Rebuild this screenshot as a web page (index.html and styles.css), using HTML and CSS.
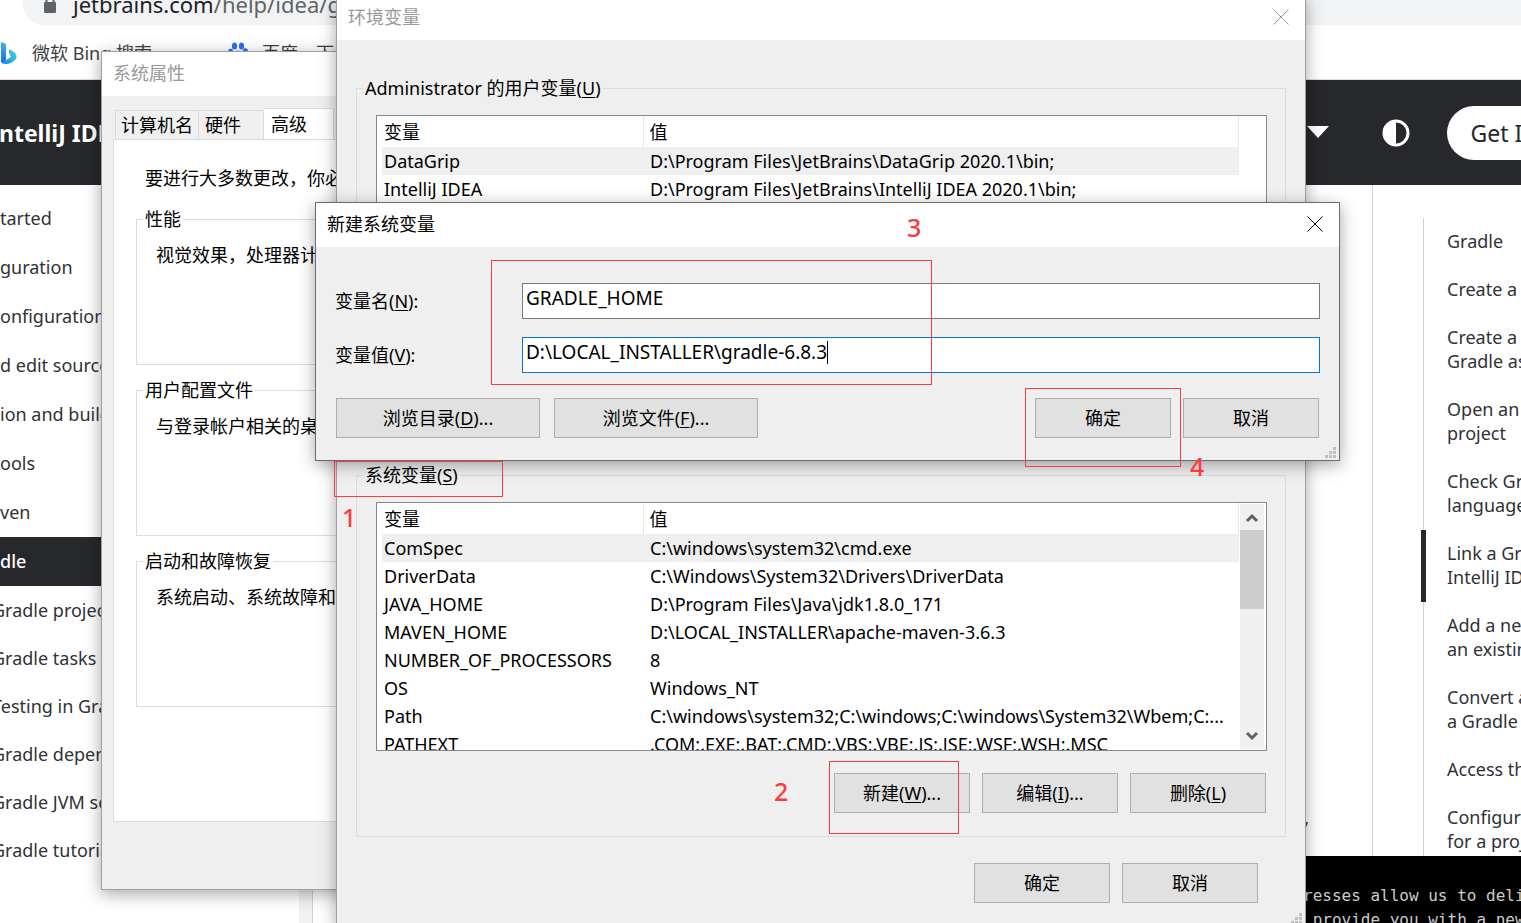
FILE: index.html
```html
<!DOCTYPE html>
<html lang="zh-CN">
<head>
<meta charset="utf-8">
<title>环境变量</title>
<link rel="stylesheet" href="styles.css">
</head>
<body>
<div class="desktop">

  <div class="browser">
    <div class="address-row">
      <div class="address">
        <svg class="lock" width="14" height="20" viewBox="0 0 14 20" aria-hidden="true"><path d="M3.5 9V5a3.5 3.5 0 0 1 7 0v4" fill="none" stroke="#5f6368" stroke-width="2"/><rect x="1" y="8" width="12" height="11" rx="1" fill="#5f6368"/></svg>
        <span>jetbrains.com<span class="path">/help/idea/gradle.html</span></span>
      </div>
    </div>
    <nav class="bookmarks">
      <a href="#" class="bookmark">
        <svg width="18" height="24" viewBox="0 0 18 24" aria-hidden="true">
          <defs><linearGradient id="bing" x1="0" y1="0" x2="0" y2="1"><stop offset="0" stop-color="#3fb4f8"/><stop offset="1" stop-color="#1a66dd"/></linearGradient><linearGradient id="bing2" x1="0" y1="1" x2="1" y2="0"><stop offset="0" stop-color="#1683e8"/><stop offset="1" stop-color="#3fe0dc"/></linearGradient></defs>
          <path d="M1 1l3 1c1 .5 2 1 2 2v15l-3 3-2-1z" fill="url(#bing)"/>
          <path d="M9 8l5 3c3 2 3.500 6 1 8-4 4-9 5-14 3l5-3 5-3-2-4z" fill="url(#bing2)"/>
        </svg>
        微软 Bing 搜索</a>
      <a href="#" class="bookmark">
        <svg width="20" height="22" viewBox="0 0 20 22" fill="#2c6df2" aria-hidden="true"><ellipse cx="6.500" cy="4" rx="2.600" ry="3.500"/><ellipse cx="13.500" cy="4" rx="2.600" ry="3.500"/><ellipse cx="2.600" cy="10" rx="2.500" ry="3.200"/><ellipse cx="17.400" cy="9.500" rx="2.500" ry="3.200"/><path d="M10 8.500c3 0 4 4 6 6s1 6.500-2.500 6.500h-7C3 21 2 17 4 14.500s3-6 6-6z"/></svg>
        百度一下，你就知道</a>
    </nav>
    <header class="site-header">
      <strong class="product">IntelliJ IDEA</strong>
      <div class="site-tools">
        <svg width="22" height="13" viewBox="0 0 22 13" aria-hidden="true"><path d="M0 0h22L11 12z" fill="#fff"/></svg>
        <svg width="28" height="28" viewBox="0 0 28 28" aria-hidden="true"><circle cx="14" cy="14" r="12" fill="none" stroke="#fff" stroke-width="3"/><path d="M14 1a13 13 0 0 0 0 26z" fill="#fff"/></svg>
        <a href="#" class="get">Get IntelliJ IDEA</a>
      </div>
    </header>
    <div class="page">
      <nav class="tree">
        <a href="#">tarted</a>
        <a href="#">guration</a>
        <a href="#">onfiguration</a>
        <a href="#">d edit source</a>
        <a href="#">ion and build</a>
        <a href="#">ools</a>
        <a href="#">ven</a>
        <a href="#" class="current">dle</a>
        <div class="subtree">
          <a href="#">Gradle projects</a>
          <a href="#">Gradle tasks</a>
          <a href="#">Testing in Gradle</a>
          <a href="#">Gradle dependencies</a>
          <a href="#">Gradle JVM selection</a>
          <a href="#">Gradle tutorial</a>
        </div>
      </nav>
      <main class="article"><p>directory</p></main>
      <nav class="toc">
        <div class="toc-list">
          <a href="#">Gradle</a>
          <a href="#">Create a</a>
          <a href="#">Create a<br>Gradle as</a>
          <a href="#">Open an<br>project</a>
          <a href="#">Check Gra<br>language</a>
          <a href="#" class="active">Link a Gra<br>IntelliJ IDEA</a>
          <a href="#">Add a new<br>an existing</a>
          <a href="#">Convert a<br>a Gradle</a>
          <a href="#">Access the</a>
          <a href="#">Configure<br>for a project</a>
        </div>
      </nav>
    </div>
  </div>

  <pre class="terminal">resses allow us to deliver
 provide you with a new</pre>

  <section class="window props" aria-label="系统属性">
    <div class="titlebar idle">系统属性</div>
    <div class="props-body">
      <div class="tabs" role="tablist">
        <button class="tab" role="tab">计算机名</button>
        <button class="tab hardware" role="tab">硬件</button>
        <button class="tab selected" role="tab">高级</button>
      </div>
      <div class="panel">
        <p class="notice">要进行大多数更改，你必</p>
        <fieldset class="group prop"><legend>性能</legend><p>视觉效果，处理器计</p></fieldset>
        <fieldset class="group prop"><legend>用户配置文件</legend><p>与登录帐户相关的桌</p></fieldset>
        <fieldset class="group prop"><legend>启动和故障恢复</legend><p>系统启动、系统故障和调</p></fieldset>
      </div>
    </div>
  </section>

  <section class="window env" aria-label="环境变量">
    <div class="titlebar idle">环境变量
      <button class="close" aria-label="关闭"><svg width="16" height="16" viewBox="0 0 16 16"><path d="M.5.5l15 15M15.500.5l-15 15" stroke="currentColor" fill="none"/></svg></button>
    </div>
    <div class="env-body">
      <fieldset class="group user-vars">
        <legend>Administrator 的用户变量(<u>U</u>)</legend>
        <div class="list">
          <table>
            <thead><tr><th class="name">变量</th><th>值</th></tr></thead>
            <tbody>
              <tr class="lit"><td>DataGrip</td><td>D:\Program Files\JetBrains\DataGrip 2020.1\bin;</td></tr>
              <tr><td>IntelliJ IDEA</td><td>D:\Program Files\JetBrains\IntelliJ IDEA 2020.1\bin;</td></tr>
            </tbody>
          </table>
        </div>
      </fieldset>
      <fieldset class="group system-vars">
        <legend>系统变量(<u>S</u>)</legend>
        <div class="list">
          <table>
            <thead><tr><th class="name">变量</th><th>值</th></tr></thead>
            <tbody>
              <tr class="lit"><td>ComSpec</td><td>C:\windows\system32\cmd.exe</td></tr>
              <tr><td>DriverData</td><td>C:\Windows\System32\Drivers\DriverData</td></tr>
              <tr><td>JAVA_HOME</td><td>D:\Program Files\Java\jdk1.8.0_171</td></tr>
              <tr><td>MAVEN_HOME</td><td>D:\LOCAL_INSTALLER\apache-maven-3.6.3</td></tr>
              <tr><td>NUMBER_OF_PROCESSORS</td><td>8</td></tr>
              <tr><td>OS</td><td>Windows_NT</td></tr>
              <tr><td>Path</td><td>C:\windows\system32;C:\windows;C:\windows\System32\Wbem;C:...</td></tr>
              <tr><td>PATHEXT</td><td>.COM;.EXE;.BAT;.CMD;.VBS;.VBE;.JS;.JSE;.WSF;.WSH;.MSC</td></tr>
            </tbody>
          </table>
          <div class="scrollbar">
            <svg width="24" height="26" viewBox="0 0 24 26" aria-hidden="true"><path d="M7 17l5-5 5 5" fill="none" stroke="#606060" stroke-width="3"/></svg>
            <div class="thumb"></div>
            <svg class="down" width="24" height="26" viewBox="0 0 24 26" aria-hidden="true"><path d="M7 10l5 5 5-5" fill="none" stroke="#606060" stroke-width="3"/></svg>
          </div>
        </div>
        <div class="buttons">
          <button class="btn">新建(<u>W</u>)...</button>
          <button class="btn">编辑(<u>I</u>)...</button>
          <button class="btn">删除(<u>L</u>)</button>
        </div>
      </fieldset>
      <div class="buttons confirm">
        <button class="btn">确定</button>
        <button class="btn">取消</button>
      </div>
    </div>
    <svg class="grip" width="11" height="11" viewBox="0 0 11 11" fill="#bfbfbf" aria-hidden="true"><path d="M8 0h3v3H8zM4 4h3v3H4zM8 4h3v3H8zM0 8h3v3H0zM4 8h3v3H4zM8 8h3v3H8z"/></svg>
  </section>

  <section class="window dialog" aria-label="新建系统变量">
    <div class="titlebar">新建系统变量
      <button class="close" aria-label="关闭"><svg width="16" height="16" viewBox="0 0 16 16"><path d="M.5.5l15 15M15.500.5l-15 15" stroke="currentColor" fill="none"/></svg></button>
    </div>
    <form class="dialog-body">
      <div class="field">
        <label for="var-name">变量名(<u>N</u>):</label>
        <div class="entry"><input id="var-name" type="text" value="GRADLE_HOME"></div>
      </div>
      <div class="field">
        <label for="var-value">变量值(<u>V</u>):</label>
        <div class="entry"><input id="var-value" class="focused" type="text" value="D:\LOCAL_INSTALLER\gradle-6.8.3"><span class="caret"></span></div>
      </div>
      <div class="dialog-buttons">
        <button type="button" class="btn wide">浏览目录(<u>D</u>)...</button>
        <button type="button" class="btn wide">浏览文件(<u>F</u>)...</button>
        <button type="button" class="btn ok">确定</button>
        <button type="button" class="btn">取消</button>
      </div>
    </form>
    <svg class="grip" width="11" height="11" viewBox="0 0 11 11" fill="#bfbfbf" aria-hidden="true"><path d="M8 0h3v3H8zM4 4h3v3H4zM8 4h3v3H8zM0 8h3v3H0zM4 8h3v3H4zM8 8h3v3H8z"/></svg>
  </section>

  <div class="mark mark-1"></div><span class="step step-1">1</span>
  <div class="mark mark-2"></div><span class="step step-2">2</span>
  <div class="mark mark-3"></div><span class="step step-3">3</span>
  <div class="mark mark-4"></div><span class="step step-4">4</span>
</div>
</body>
</html>
```

FILE: styles.css
```css
* { box-sizing: border-box; }

body, p, pre { margin: 0; }

body, button, input {
  font-family: "Noto Sans", "Noto Sans CJK SC", sans-serif;
  font-size: 18px;
  line-height: 24px;
}

body { overflow: hidden; color: #000; }
a { color: inherit; text-decoration: none; }
u { text-underline-offset: 2px; text-decoration-thickness: 1px; }
svg { display: block; flex: none; }

.desktop {
  position: relative;
  height: 100vh;
  overflow: hidden;
  background: #fff;
}

/* Browser behind the dialogs */
.browser { display: flex; flex-direction: column; height: 100%; }

.address-row {
  flex: none;
  height: 25px;
  padding-left: 23px;
  overflow: hidden;
  display: flex;
  align-items: flex-end;
}
.address {
  flex: 1;
  height: 42px;
  padding: 0 20px;
  display: flex;
  align-items: center;
  gap: 16px;
  border-radius: 21px 0 0 21px;
  background: #f1f3f4;
  color: #202124;
  font-size: 22px;
  white-space: nowrap;
}
.path { color: #5f6368; }

.bookmarks {
  flex: none;
  height: 55px;
  padding-top: 2px;
  display: flex;
  align-items: center;
  gap: 76px;
  border-bottom: 1px solid #dadce0;
  color: #3c4043;
}
.bookmark { display: flex; align-items: center; gap: 14px; white-space: nowrap; }

.site-header {
  flex: none;
  height: 105px;
  display: flex;
  align-items: center;
  justify-content: space-between;
  background: #27282c;
  color: #fff;
  overflow: hidden;
}
.product { margin-left: -10px; font-size: 23px; white-space: nowrap; }
.site-tools { display: flex; align-items: center; gap: 53px; margin-right: -143px; }
.get {
  height: 54px;
  margin-left: -16px;
  padding: 15px 24px;
  border-radius: 27px;
  background: #fff;
  color: #27282c;
  font-size: 23px;
  white-space: nowrap;
}

.page { flex: 1; min-height: 0; display: flex; overflow: hidden; color: #303236; }
.tree {
  width: 313px;
  padding-top: 9px;
  border-right: 1px solid #d1d1d2;
  background: linear-gradient(#f1f1f1, #f1f1f1) right / 13px 100% no-repeat;
  white-space: nowrap;
  overflow: hidden;
}
.tree a { display: block; height: 49px; line-height: 49px; }
.tree .current { background: #27282c; color: #fff; margin-right: 13px; font-weight: 500; }
.subtree { margin-left: -8px; }
.subtree a { height: 48px; line-height: 48px; }

.article {
  flex: 1;
  display: flex;
  align-items: flex-end;
  justify-content: flex-end;
  padding: 0 64px 86px;
}
.toc {
  width: 149px;
  padding: 33px 0 0 50px;
  border-left: 1px solid #d1d1d2;
  white-space: nowrap;
}
.toc-list { border-left: 1px solid #d1d1d2; }
.toc a { display: block; padding: 11px 0 13px 23px; }
.toc .active { margin-left: -3px; padding-left: 21px; border-left: 5px solid #27282c; }

.terminal {
  position: absolute;
  left: 1303px;
  right: 0;
  bottom: 0;
  height: 67px;
  padding-top: 28px;
  overflow: hidden;
  background: #000;
  color: #ccc;
  font: 16px/24px "DejaVu Sans Mono", monospace;
}

/* Windows */
.window {
  position: absolute;
  display: flex;
  flex-direction: column;
  border: 1px solid #a0a0a0;
  background: #efefef;
  box-shadow: 0 4px 16px rgba(0, 0, 0, .35);
}
.titlebar {
  flex: none;
  height: 44px;
  padding: 0 10px 2px 11px;
  display: flex;
  align-items: center;
  justify-content: space-between;
  background: #fff;
}
.idle { color: #999; }
.close {
  padding: 6px;
  border: 0;
  background: none;
  color: inherit;
}
.grip { position: absolute; right: 3px; bottom: 2px; }

.group {
  min-width: 0;
  margin: 0;
  padding: 0 6px;
  border: 1px solid #dcdcdc;
}
.group legend { padding: 0 2px; }

.btn {
  width: 136px;
  height: 40px;
  padding: 0;
  border: 1px solid #adadad;
  background: #e1e1e1;
  color: #000;
}
.buttons { display: flex; justify-content: flex-end; gap: 12px; }

/* System properties */
.props { left: 101px; top: 51px; width: 620px; height: 839px; }
.props-body { flex: 1; padding: 12px 11px 67px; display: flex; flex-direction: column; }
.tabs { display: flex; align-items: flex-end; height: 31px; padding-left: 2px; }
.tab {
  height: 29px;
  padding: 0 5px;
  border: 1px solid #dcdcdc;
  border-width: 1px 1px 0 0;
  background: #f0f0f0;
  color: #000;
  white-space: nowrap;
}
.tab:first-child { border-left-width: 1px; }
.hardware { width: 65px; padding-left: 6px; text-align: left; }
.selected { width: 70px; height: 31px; padding: 0 7px; text-align: left; background: #fff; }
.panel {
  flex: 1;
  padding: 26px 22px;
  border: 1px solid #dcdcdc;
  background: #fff;
}
.notice { margin: 0 0 17px 9px; }
.prop { height: 158px; margin-bottom: 13px; }
.prop p { margin: 12px 13px; }

/* Environment variables */
.env { left: 336px; top: -5px; width: 970px; height: 932px; }
.env-body { padding: 36px 19px 0; }
.user-vars { height: 374px; margin-bottom: 13px; }
.list {
  display: flex;
  margin: 15px 12px 22px 13px;
  height: 249px;
  padding-left: 5px;
  overflow: hidden;
  border: 1px solid #828790;
  background: #fff;
}
.list table {
  width: 857px;
  flex: none;
  align-self: flex-start;
  border-collapse: collapse;
  table-layout: fixed;
}
.list th {
  height: 31px;
  padding: 0 0 0 6px;
  border-right: 1px solid #e5e5e5;
  font-weight: 400;
  text-align: left;
}
.list .name { width: 261px; padding-left: 2px; }
.list td { height: 28px; padding: 0 0 0 7px; white-space: nowrap; }
.list td:first-child { padding-left: 2px; }
.lit { background: #efefef; }
.scrollbar {
  width: 24px;
  margin: 1px 0 1px 1px;
  display: flex;
  flex-direction: column;
  background: #f0f0f0;
}
.thumb { height: 79px; background: #cdcdcd; }
.down { margin-top: auto; }
.system-vars { height: 374px; margin-bottom: 26px; }
.system-vars .buttons { margin-right: 13px; }
.confirm { margin-right: 28px; }

/* New variable dialog */
.dialog { left: 315px; top: 202px; width: 1025px; height: 259px; border-color: #6b6b6b; }
.dialog-body { padding: 36px 19px 0; display: flex; flex-direction: column; gap: 18px; }
.field { display: flex; align-items: center; }
.field label { width: 187px; }
.entry { position: relative; flex: 1; display: flex; }
.entry input {
  flex: 1;
  height: 36px;
  padding: 0 3px 6px;
  border: 1px solid #7a7a7a;
  border-radius: 0;
  outline: 0;
  background: #fff;
  color: #000;
  font-size: 19px;
}
.entry .focused { border-color: #0078d7; }
.caret { position: absolute; left: 305px; top: 4px; width: 1px; height: 23px; background: #000; }
.dialog-buttons { display: flex; gap: 12px; padding: 7px 1px 0; }
.wide { width: 204px; margin-right: 2px; }
.ok { margin-left: auto; }

/* Numbered steps drawn over the windows */
.mark { position: absolute; border: 1px solid #fa3c3c; }
.mark-1 { left: 334px; top: 461px; width: 169px; height: 36px; }
.mark-2 { left: 829px; top: 761px; width: 130px; height: 73px; }
.mark-3 { left: 491px; top: 260px; width: 441px; height: 125px; }
.mark-4 { left: 1025px; top: 388px; width: 156px; height: 79px; }
.step { position: absolute; color: #fa3c3c; font-size: 25px; font-weight: 500; }
.step-1 { left: 342px; top: 505px; }
.step-2 { left: 774px; top: 779px; }
.step-3 { left: 907px; top: 215px; }
.step-4 { left: 1190px; top: 454px; }
```
